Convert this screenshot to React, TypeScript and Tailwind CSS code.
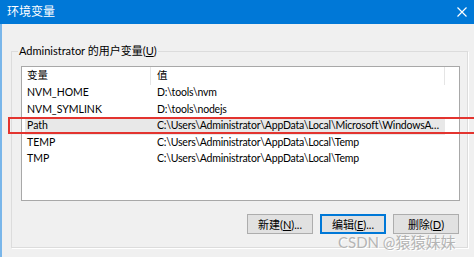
const rows = [
  { name: "NVM_HOME", value: "D:\\tools\\nvm" },
  { name: "NVM_SYMLINK", value: "D:\\tools\\nodejs" },
  { name: "Path", value: "C:\\Users\\Administrator\\AppData\\Local\\Microsoft\\WindowsA…", selected: true },
  { name: "TEMP", value: "C:\\Users\\Administrator\\AppData\\Local\\Temp" },
  { name: "TMP", value: "C:\\Users\\Administrator\\AppData\\Local\\Temp" },
];

const font = { fontFamily: 'Lato, "Noto Sans CJK SC", sans-serif' };

export default function App() {
  return (
    <div
      className="relative w-[474px] h-[257px] overflow-hidden bg-[#f0f0f0] text-[10.5px] text-black"
      style={font}
    >
      {/* title bar */}
      <div className="flex h-[24px] items-center justify-between bg-[#0078d7] pl-[7px] pr-[5px] text-white">
        <span className="text-[12px] leading-none">环境变量</span>
        <svg width="10" height="10" viewBox="0 0 10 10" className="mr-[2px]">
          <path d="M0.5 0.5L9.5 9.5M9.5 0.5L0.5 9.5" stroke="white" strokeWidth="1.2" />
        </svg>
      </div>

      <div className="flex h-[233px]">
        <div className="w-[2px] bg-[#79b6ea]" />
        <div className="min-w-0 flex-1 pl-[9px] pr-[6px] pt-[27px]">
          {/* group box */}
          <div className="h-[197px] border border-[#dcdcdc] shadow-[1px_1px_0_#ffffff]">
            <div className="-mt-[9px] ml-[6px] flex">
              <span className="bg-[#f0f0f0] px-[1px] text-[11px] leading-[16px]">
                Administrator 的用户变量(<span className="underline">U</span>)
              </span>
            </div>
            <div className="ml-[9px] mr-[7px] mt-[7px] h-[135px] overflow-hidden border border-[#a8a8a8] bg-white">
              <div className="flex h-[18px] items-center">
                <div className="flex h-full w-[129px] items-center border-r border-[#e5e5e5] pl-[5px]">变量</div>
                <div className="flex h-full w-[294px] items-center border-r border-[#e5e5e5] pl-[6px]">值</div>
              </div>
              {rows.map((r) => (
                <div
                  key={r.name}
                  className={`flex h-[16.5px] items-center ${r.selected ? "bg-[#e8e8e8] mr-[14px] ml-[3px]" : ""}`}
                >
                  <div className={`${r.selected ? "w-[126px] pl-[2px]" : "w-[129px] pl-[5px]"} shrink-0 whitespace-nowrap`}>{r.name}</div>
                  <div className="whitespace-nowrap pl-[6px] tracking-[-0.2px]">{r.value}</div>
                </div>
              ))}
            </div>
            <div className="mr-[8px] mt-[13px] flex justify-end gap-[7px]">
              <button className="h-[20px] w-[66px] border border-[#adadad] bg-[#e1e1e1] text-[11px] leading-none">
                新建(<span className="underline">N</span>)...
              </button>
              <button className="h-[20px] w-[66px] border-2 border-[#0078d7] bg-[#e1e1e1] text-[11px] leading-none">
                编辑(<span className="underline">E</span>)...
              </button>
              <button className="h-[20px] w-[66px] border border-[#adadad] bg-[#e1e1e1] text-[11px] leading-none">
                删除(<span className="underline">D</span>)
              </button>
            </div>
          </div>
        </div>
      </div>

      {/* red annotation box */}
      <div className="absolute left-[8px] top-[117px] h-[17px] w-[480px] border-2 border-[#e3342f]" />

      {/* watermark */}
      <div className="absolute left-[338px] top-[235px] whitespace-nowrap text-[15px] leading-none text-[#b4b4b4] [text-shadow:1px_1px_0_#ffffff]">
        CSDN @猿猿妹妹
      </div>
    </div>
  );
}
